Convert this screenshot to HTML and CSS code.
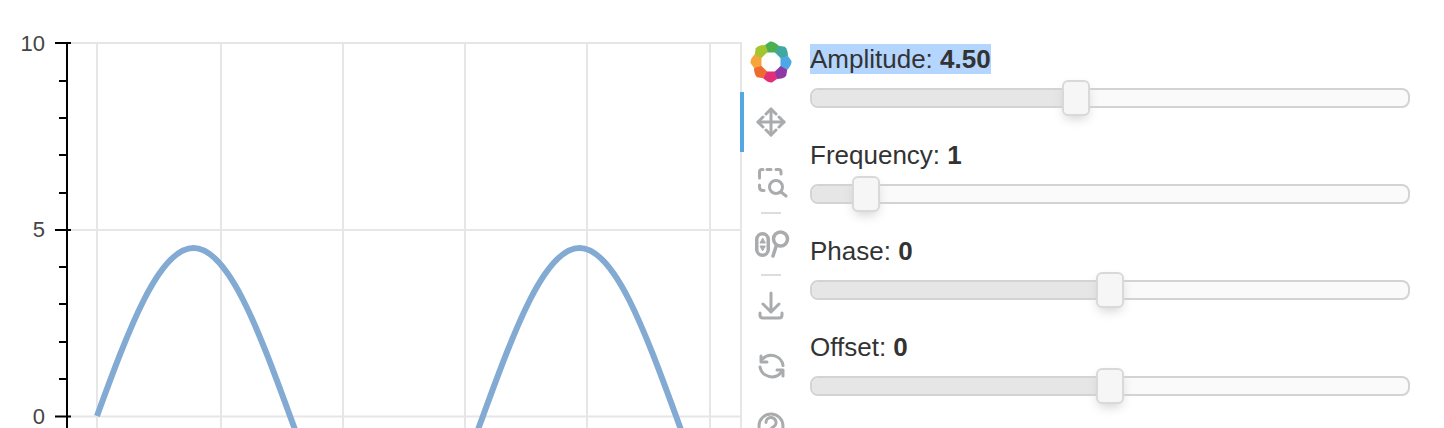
FILE: index.html
```html
<!DOCTYPE html>
<html>
<head>
  <title>Sine Wave Sliders</title>
  <link rel="stylesheet" href="styles.css">
</head>
<body>
  <div class="page">
    <!-- plot -->
    <svg class="plot" width="742" height="428" viewBox="0 0 742 428">
      <g class="grid">
        <path d="M67 43H741M67 230H741M67 416.5H741"/>
        <path d="M97 43V428M221 43V428M343 43V428M465 43V428M587 43V428M710 43V428"/>
        <path d="M741 42V428"/>
      </g>
      <path class="curve" d="M97 416C128.5 330 158.6 248 193.5 248C228.4 248 258.5 330 290 416C321.5 502 351.6 584 386.5 584C421.4 584 451.5 502 483 416C514.5 330 544.6 248 579.5 248C614.4 248 644.5 330 676 416C690 455 700 480 710 500"/>
      <g class="axis">
        <path d="M67 42V428"/>
        <path d="M55 43H71M55 230H71M55 416.5H71"/>
        <path d="M59 81H67M59 118H67M59 155H67M59 193H67M59 267H67M59 304H67M59 342H67M59 379H67"/>
      </g>
      <g class="tick-labels">
        <text x="45" y="51">10</text>
        <text x="45" y="237">5</text>
        <text x="45" y="424">0</text>
      </g>
    </svg>

    <!-- toolbar -->
    <div class="toolbar">
      <div class="tool">
        <svg width="44" height="44" viewBox="-22 -22 44 44">
          <path fill="#4caf50" d="M-6 -17L-1 -20.5Q3 -21 8 -16L5 -9.5L-4 -9.5Z"/>
          <path fill="#3fa9a0" transform="rotate(45)" d="M-6 -17L-1 -20.5Q3 -21 8 -16L5 -9.5L-4 -9.5Z"/>
          <path fill="#4fa8e6" transform="rotate(90)" d="M-6 -17L-1 -20.5Q3 -21 8 -16L5 -9.5L-4 -9.5Z"/>
          <path fill="#8e3aa6" transform="rotate(135)" d="M-6 -17L-1 -20.5Q3 -21 8 -16L5 -9.5L-4 -9.5Z"/>
          <path fill="#e22f78" transform="rotate(180)" d="M-6 -17L-1 -20.5Q3 -21 8 -16L5 -9.5L-4 -9.5Z"/>
          <path fill="#ee6a2e" transform="rotate(225)" d="M-6 -17L-1 -20.5Q3 -21 8 -16L5 -9.5L-4 -9.5Z"/>
          <path fill="#f5a53a" transform="rotate(270)" d="M-6 -17L-1 -20.5Q3 -21 8 -16L5 -9.5L-4 -9.5Z"/>
          <path fill="#a3c62f" transform="rotate(315)" d="M-6 -17L-1 -20.5Q3 -21 8 -16L5 -9.5L-4 -9.5Z"/>
        </svg>
      </div>
      <div class="tool active">
        <svg class="icon" width="32" height="32" viewBox="-16 -16 32 32">
          <path d="M0 -13V13M-13 0H13"/>
          <path d="M-5 -8L0 -13L5 -8M-5 8L0 13L5 8M-8 -5L-13 0L-8 5M8 -5L13 0L8 5"/>
        </svg>
      </div>
      <div class="tool">
        <svg class="icon" width="34" height="34" viewBox="0 0 34 34">
          <path d="M5.5 13V7Q5.5 4.5 8 4.5H9M13 4.5H17M22 4.5H24.5Q27 4.5 27 7V9M5.5 20V22Q5.5 25.5 9 25.5H10"/>
          <circle cx="22" cy="22" r="6.5"/>
          <path d="M27 27L32 31"/>
        </svg>
      </div>
      <div class="tool-sep"></div>
      <div class="tool">
        <svg class="icon wheel" width="38" height="34" viewBox="0 0 38 34">
          <rect x="4.75" y="6.75" width="11.5" height="21.5" rx="5.75"/>
          <path class="thin" d="M10.5 11.5L8 16H13ZM10.5 23.5L8 19H13Z"/>
          <circle cx="28.5" cy="12" r="7"/>
          <path d="M24 19.5L21 29"/>
        </svg>
      </div>
      <div class="tool-sep"></div>
      <div class="tool">
        <svg class="icon" width="32" height="32" viewBox="0 0 32 32">
          <path d="M16 3V22M8 14L16 22L24 14"/>
          <path d="M5 23V25Q5 28 8 28H24Q27 28 27 25V23"/>
        </svg>
      </div>
      <div class="tool">
        <svg class="icon" width="32" height="32" viewBox="0 0 32 32">
          <path d="M7.5 9A12 12 0 0 1 28 15.5M26 22.5A12 12 0 0 1 5 17"/>
          <path d="M6 6V12H12M28 26V20H22"/>
        </svg>
      </div>
      <div class="tool">
        <svg class="icon" width="32" height="32" viewBox="0 0 32 32">
          <circle cx="16" cy="16" r="12"/>
          <path d="M11 12.5A5 5 0 1 1 18 17Q16 18 16 20"/>
          <circle cx="16" cy="24" r="0.6"/>
        </svg>
      </div>
    </div>

    <!-- sliders -->
    <div class="controls">
      <div class="control">
        <div class="label"><span class="selected">Amplitude: <b>4.50</b></span></div>
        <div class="slider">
          <div class="fill" style="width: 44.3%"></div>
          <div class="handle" style="left: 44.3%"></div>
        </div>
      </div>
      <div class="control">
        <div class="label">Frequency: <b>1</b></div>
        <div class="slider">
          <div class="fill" style="width: 9.1%"></div>
          <div class="handle" style="left: 9.1%"></div>
        </div>
      </div>
      <div class="control">
        <div class="label">Phase: <b>0</b></div>
        <div class="slider">
          <div class="fill" style="width: 50%"></div>
          <div class="handle" style="left: 50%"></div>
        </div>
      </div>
      <div class="control">
        <div class="label">Offset: <b>0</b></div>
        <div class="slider">
          <div class="fill" style="width: 50%"></div>
          <div class="handle" style="left: 50%"></div>
        </div>
      </div>
    </div>
  </div>
</body>
</html>
```
FILE: styles.css
```css
html, body {
    margin: 0;
    height: 428px;
    overflow: hidden;
    background-color: white;
}

.page {
    display: flex;
    align-items: flex-start;
    height: 428px;
    font-family: "Liberation Sans", Arial, sans-serif;
    color: #333;
}

/* plot */
.plot {
    display: block;
    flex: none;
}
.grid path {
    fill: none;
    stroke: #e6e6e6;
    stroke-width: 2;
}
.curve {
    fill: none;
    stroke: #82aad3;
    stroke-width: 6;
}
.axis path {
    fill: none;
    stroke: black;
    stroke-width: 2;
}
.tick-labels text {
    font-size: 22px;
    fill: #444;
    text-anchor: end;
}

/* toolbar */
.toolbar {
    flex: none;
    width: 58px;
    margin-top: 32px;
}
.tool {
    position: relative;
    display: flex;
    align-items: center;
    justify-content: center;
    height: 60px;
}
.tool.active::before {
    content: "";
    position: absolute;
    left: -2px;
    top: 0;
    bottom: 0;
    width: 4px;
    background-color: #53a8e2;
}
.tool-sep {
    width: 20px;
    height: 2px;
    margin: 0 auto;
    background-color: #ddd;
}
.icon {
    fill: none;
    stroke: #a9abad;
    stroke-width: 3;
    stroke-linecap: round;
    stroke-linejoin: round;
}
.icon.wheel {
    stroke-width: 3.5;
}
.icon .thin {
    stroke-width: 1;
    fill: #a9abad;
}

/* sliders */
.controls {
    flex: none;
    width: 600px;
    margin-left: 10px;
    padding-top: 44px;
}
.control {
    height: 96px;
}
.label {
    height: 30px;
    margin-bottom: 14px;
    font-size: 26px;
    line-height: 30px;
}
.selected {
    display: inline-block;
    background-color: #b4d5fe;
}
.slider {
    position: relative;
    box-sizing: border-box;
    height: 20px;
    border: 2px solid #d3d3d3;
    border-radius: 8px;
    background-color: #fafafa;
}
.fill {
    height: 100%;
    border-radius: 6px 0 0 6px;
    background-color: #e6e6e6;
}
.handle {
    position: absolute;
    top: -10px;
    box-sizing: border-box;
    width: 28px;
    height: 36px;
    margin-left: -14px;
    border: 2px solid #d9d9d9;
    border-radius: 6px;
    background-color: #f6f6f6;
    box-shadow: 0 5px 12px -3px #ccc;
}
```
